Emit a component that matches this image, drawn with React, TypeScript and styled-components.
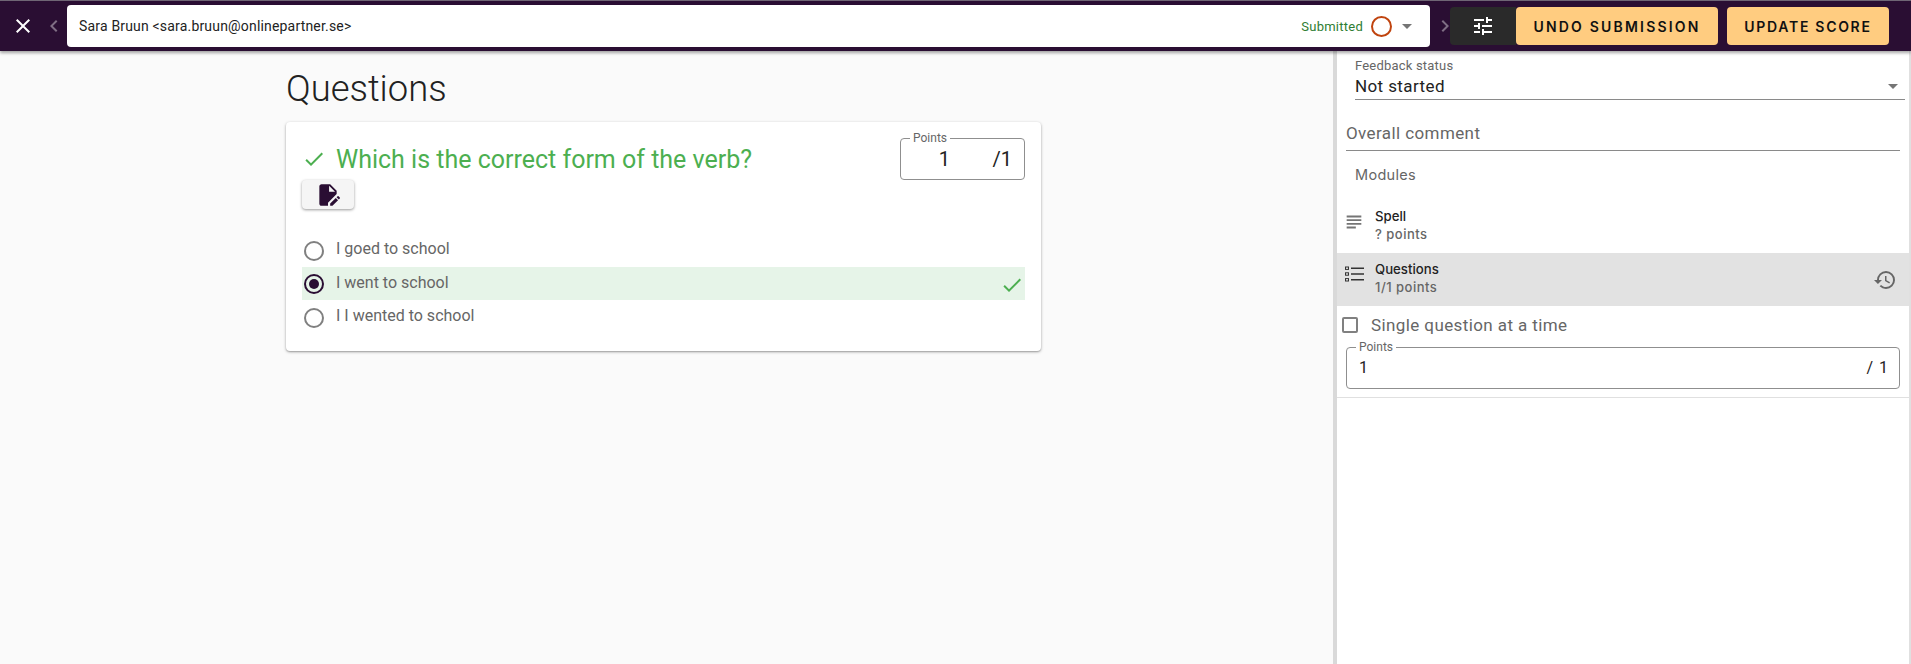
import styled, { createGlobalStyle } from "styled-components";
import {
  MdArrowDropDown,
  MdCheck,
  MdChevronLeft,
  MdChevronRight,
  MdClose,
  MdEditDocument,
  MdHistory,
  MdSubject,
  MdTune,
} from "react-icons/md";

const GlobalStyle = createGlobalStyle`
  html, body {
    margin: 0;
    padding: 0;
    height: 100%;
    overflow: hidden;
    background: #fafafa;
    font-family: Roboto, "Liberation Sans", sans-serif;
  }
  * {
    box-sizing: border-box;
  }
`;

const Page = styled.div`
  width: 1911px;
  height: 664px;
  display: flex;
  flex-direction: column;
`;

const TopBar = styled.header`
  height: 51px;
  flex: none;
  background: #2a0e33;
  border-top: 1px solid #6f6675;
  display: flex;
  align-items: center;
  box-shadow: 0 2px 3px rgba(0, 0, 0, 0.35);
  position: relative;
  z-index: 2;
`;

const NavIcon = styled.span<{ $dim?: boolean }>`
  display: flex;
  color: ${(p) => (p.$dim ? "rgba(255,255,255,0.4)" : "#fff")};
`;

const CloseSlot = styled.div`
  width: 46px;
  display: flex;
  justify-content: center;
`;

const BackSlot = styled.div`
  width: 21px;
  padding-right: 6px;
  display: flex;
  justify-content: center;
`;

const NextSlot = styled.div`
  width: 20px;
  padding-left: 10px;
  display: flex;
  justify-content: center;
`;

const UserSelect = styled.div`
  width: 1363px;
  height: 42px;
  background: #fff;
  border-radius: 4px;
  display: flex;
  align-items: center;
  padding: 0 11px 0 12px;
`;

const UserName = styled.span`
  flex: 1;
  font-size: 14px;
  letter-spacing: 0.18px;
  color: #222;
`;

const StatusLabel = styled.span`
  font-size: 13px;
  color: #2e7d32;
  letter-spacing: 0.25px;
`;

const StatusRing = styled.span`
  width: 21px;
  height: 21px;
  margin-left: 8px;
  border: 2px solid #c0440f;
  border-radius: 50%;
`;

const Caret = styled.span<{ $pad?: number }>`
  display: flex;
  color: #757575;
  margin-left: ${(p) => p.$pad ?? 0}px;
`;

const SettingsButton = styled.button`
  width: 66px;
  height: 38px;
  border: 0;
  border-radius: 4px 0 0 4px;
  background: #2a2a2a;
  color: #fff;
  display: flex;
  align-items: center;
  justify-content: center;
  padding: 0;
`;

const ActionButton = styled.button<{ $w: number; $track: number }>`
  width: ${(p) => p.$w}px;
  height: 38px;
  border: 0;
  border-radius: 4px;
  background: #ffcc80;
  color: #111;
  font-family: Inter, sans-serif;
  font-size: 14px;
  font-weight: 600;
  letter-spacing: ${(p) => p.$track}px;
  padding: 0;
`;

const ActionGap = styled.div`
  width: 9px;
`;

const Body = styled.div`
  flex: 1;
  display: flex;
  min-height: 0;
`;

const Main = styled.main`
  width: 1333px;
  flex: none;
  padding-left: 286px;
`;

const PageTitle = styled.h1`
  margin: 16px 0 12px;
  height: 43px;
  line-height: 43px;
  font-size: 36.4px;
  font-weight: 350;
  color: #212121;
`;

const Card = styled.section`
  width: 755px;
  height: 229px;
  background: #fff;
  border-radius: 4px;
  box-shadow: 0 1px 3px rgba(0, 0, 0, 0.35), 0 1px 1px rgba(0, 0, 0, 0.1);
  padding: 16px 16px 0;
`;

const CardHead = styled.div`
  display: flex;
  justify-content: space-between;
  height: 42px;
`;

const QuestionTitle = styled.div`
  display: flex;
  align-items: center;
  height: 32px;
  margin-top: 5px;
  color: #4caf50;
  font-size: 25px;
  gap: 10px;
`;

const GreenCheck = styled(MdCheck)`
  color: #4caf50;
  flex: none;
`;

const RowCheck = styled(GreenCheck)`
  margin-top: 4px;
`;

const ScoreField = styled.fieldset`
  width: 125px;
  height: 48px;
  margin: -6px 0 0;
  padding: 0 12px;
  border: 1px solid #8f8f8f;
  border-radius: 4px;
  display: flex;
  align-items: center;
`;

const FieldLegend = styled.legend`
  padding: 0 3px;
  margin-left: -3px;
  font-size: 12px;
  line-height: 12px;
  color: #666;
`;

const ScoreValue = styled.span`
  flex: 1;
  text-align: center;
  font-size: 20px;
  color: #222;
  margin-top: -6px;
  margin-right: 17px;
`;

const ScoreTotal = styled.span`
  font-size: 20px;
  color: #222;
  margin-top: -6px;
`;

const EditButton = styled.button`
  width: 52px;
  height: 29px;
  display: flex;
  align-items: center;
  justify-content: center;
  margin-bottom: 24px;
  padding: 0;
  border: 0;
  border-radius: 4px;
  background: #f5f5f5;
  color: #2a0e33;
  box-shadow: 0 1px 3px rgba(0, 0, 0, 0.4);
`;

const Options = styled.div`
  display: flex;
  flex-direction: column;
`;

const Option = styled.div<{ $correct?: boolean }>`
  height: 33.5px;
  display: flex;
  align-items: center;
  padding: 0 1px 0 2px;
  background: ${(p) => (p.$correct ? "#e6f4e8" : "transparent")};
`;

const Radio = styled.span<{ $checked?: boolean }>`
  width: 20px;
  height: 20px;
  flex: none;
  border: 2px solid ${(p) => (p.$checked ? "#2a0e33" : "#808080")};
  border-radius: 50%;
  display: flex;
  align-items: center;
  justify-content: center;
  margin-top: 2px;
  &::after {
    content: "";
    display: ${(p) => (p.$checked ? "block" : "none")};
    width: 10px;
    height: 10px;
    border-radius: 50%;
    background: #2a0e33;
  }
`;

const OptionText = styled.span<{ $correct?: boolean }>`
  flex: 1;
  margin-left: 12px;
  font-size: 16px;
  color: #666;
  margin-top: ${(p) => (p.$correct ? "-1px" : "-3px")};
`;

const Side = styled.aside`
  width: 578px;
  flex: none;
  background: #fff;
  border-left: 4px solid #d9d9d9;
  border-right: 2px solid #e0e0e0;
  display: flex;
  flex-direction: column;
`;

const StatusField = styled.div`
  margin: 7px 4px 0 18px;
  height: 42px;
  border-bottom: 1px solid #8a8a8a;
  position: relative;
`;

const SmallLabel = styled.div`
  font-size: 13px;
  line-height: 15px;
  color: #666;
  letter-spacing: 0.2px;
`;

const StatusValue = styled.div`
  font-size: 17px;
  line-height: 26px;
  color: #222;
  letter-spacing: 0.4px;
`;

const StatusCaret = styled(Caret)`
  position: absolute;
  right: 0;
  top: 16px;
`;

const CommentField = styled.div`
  margin: 21px 9px 0 9px;
  height: 30px;
  border-bottom: 1px solid #8a8a8a;
  font-size: 17px;
  line-height: 24px;
  color: #666;
  letter-spacing: 0.4px;
`;

const ModulesHeading = styled.div`
  margin: 13px 0 14px 18px;
  font-family: Inter, sans-serif;
  font-size: 14.5px;
  line-height: 22px;
  color: #666;
  letter-spacing: 0.3px;
`;

const ModuleRow = styled.div<{ $active?: boolean }>`
  height: 53px;
  display: flex;
  align-items: center;
  padding: 0 12px 4px 6px;
  background: ${(p) => (p.$active ? "#e2e2e2" : "transparent")};
`;

const ModuleIcon = styled.span<{ $dark?: boolean }>`
  width: 22px;
  margin-top: ${(p) => (p.$dark ? "-7px" : "-6px")};
  padding-left: ${(p) => (p.$dark ? "2px" : "0")};
  display: flex;
  color: ${(p) => (p.$dark ? "#333" : "#757575")};
`;

const ModuleText = styled.div`
  flex: 1;
  margin-left: 10px;
`;

const ModuleName = styled.div`
  font-family: Inter, sans-serif;
  font-size: 13.2px;
  font-weight: 500;
  line-height: 18px;
  color: #222;
`;

const ModulePoints = styled.div`
  font-family: Inter, sans-serif;
  font-size: 13px;
  font-weight: 500;
  line-height: 18px;
  color: #666;
  letter-spacing: 0.5px;
`;

const HistoryIcon = styled(MdHistory)`
  color: #666;
  margin-top: 4px;
`;

const CheckRow = styled.label`
  display: flex;
  align-items: center;
  height: 28px;
  margin: 5px 0 0 5px;
`;

const CheckBox = styled.span`
  width: 16px;
  height: 16px;
  border: 2px solid #808080;
  border-radius: 2px;
`;

const CheckText = styled.span`
  margin-left: 13px;
  font-size: 17px;
  color: #666;
  letter-spacing: 0.4px;
`;

const PointsField = styled.fieldset`
  margin: 2px 9px 0;
  height: 48px;
  padding: 0 10px 0 12px;
  border: 1px solid #8f8f8f;
  border-radius: 4px;
  display: flex;
  align-items: center;
  justify-content: space-between;
`;

const PointsValue = styled.span`
  font-size: 16px;
  color: #222;
  margin-top: 5px;
  letter-spacing: 1px;
`;

const Divider = styled.div`
  margin-top: 8px;
  height: 1px;
  background: #e0e0e0;
`;

function ChecklistIcon() {
  return (
    <svg width="20" height="16" viewBox="0 0 20 16" fill="none" stroke="currentColor">
      <rect x="0.5" y="1" width="3" height="2.4" strokeWidth="1" />
      <rect x="0.5" y="6.8" width="3" height="2.4" strokeWidth="1" />
      <rect x="0.5" y="12.6" width="3" height="2.4" strokeWidth="1" />
      <path d="M6 2.2H19M6 8H19M6 13.8H19" strokeWidth="1.6" />
    </svg>
  );
}

export default function App() {
  return (
    <Page>
      <GlobalStyle />
      <TopBar>
        <CloseSlot>
          <NavIcon>
            <MdClose size={24} />
          </NavIcon>
        </CloseSlot>
        <BackSlot>
          <NavIcon $dim>
            <MdChevronLeft size={24} />
          </NavIcon>
        </BackSlot>
        <UserSelect>
          <UserName>Sara Bruun &lt;sara.bruun@onlinepartner.se&gt;</UserName>
          <StatusLabel>Submitted</StatusLabel>
          <StatusRing />
          <Caret $pad={3}>
            <MdArrowDropDown size={24} />
          </Caret>
        </UserSelect>
        <NextSlot>
          <NavIcon $dim>
            <MdChevronRight size={24} />
          </NavIcon>
        </NextSlot>
        <SettingsButton>
          <MdTune size={24} />
        </SettingsButton>
        <ActionButton $w={202} $track={2.2}>
          UNDO SUBMISSION
        </ActionButton>
        <ActionGap />
        <ActionButton $w={162} $track={1.7}>
          UPDATE SCORE
        </ActionButton>
      </TopBar>
      <Body>
        <Main>
          <PageTitle>Questions</PageTitle>
          <Card>
            <CardHead>
              <QuestionTitle>
                <GreenCheck size={24} />
                Which is the correct form of the verb?
              </QuestionTitle>
              <ScoreField>
                <FieldLegend>Points</FieldLegend>
                <ScoreValue>1</ScoreValue>
                <ScoreTotal>/1</ScoreTotal>
              </ScoreField>
            </CardHead>
            <EditButton>
              <MdEditDocument size={26} />
            </EditButton>
            <Options>
              <Option>
                <Radio />
                <OptionText>I goed to school</OptionText>
              </Option>
              <Option $correct>
                <Radio $checked />
                <OptionText $correct>I went to school</OptionText>
                <RowCheck size={24} />
              </Option>
              <Option>
                <Radio />
                <OptionText>I I wented to school</OptionText>
              </Option>
            </Options>
          </Card>
        </Main>
        <Side>
          <StatusField>
            <SmallLabel>Feedback status</SmallLabel>
            <StatusValue>Not started</StatusValue>
            <StatusCaret>
              <MdArrowDropDown size={24} />
            </StatusCaret>
          </StatusField>
          <CommentField>Overall comment</CommentField>
          <ModulesHeading>Modules</ModulesHeading>
          <ModuleRow>
            <ModuleIcon>
              <MdSubject size={22} />
            </ModuleIcon>
            <ModuleText>
              <ModuleName>Spell</ModuleName>
              <ModulePoints>? points</ModulePoints>
            </ModuleText>
          </ModuleRow>
          <ModuleRow $active>
            <ModuleIcon $dark>
              <ChecklistIcon />
            </ModuleIcon>
            <ModuleText>
              <ModuleName>Questions</ModuleName>
              <ModulePoints>1/1 points</ModulePoints>
            </ModuleText>
            <HistoryIcon size={24} />
          </ModuleRow>
          <CheckRow>
            <CheckBox />
            <CheckText>Single question at a time</CheckText>
          </CheckRow>
          <PointsField>
            <FieldLegend>Points</FieldLegend>
            <PointsValue>1</PointsValue>
            <PointsValue>/ 1</PointsValue>
          </PointsField>
          <Divider />
        </Side>
      </Body>
    </Page>
  );
}
